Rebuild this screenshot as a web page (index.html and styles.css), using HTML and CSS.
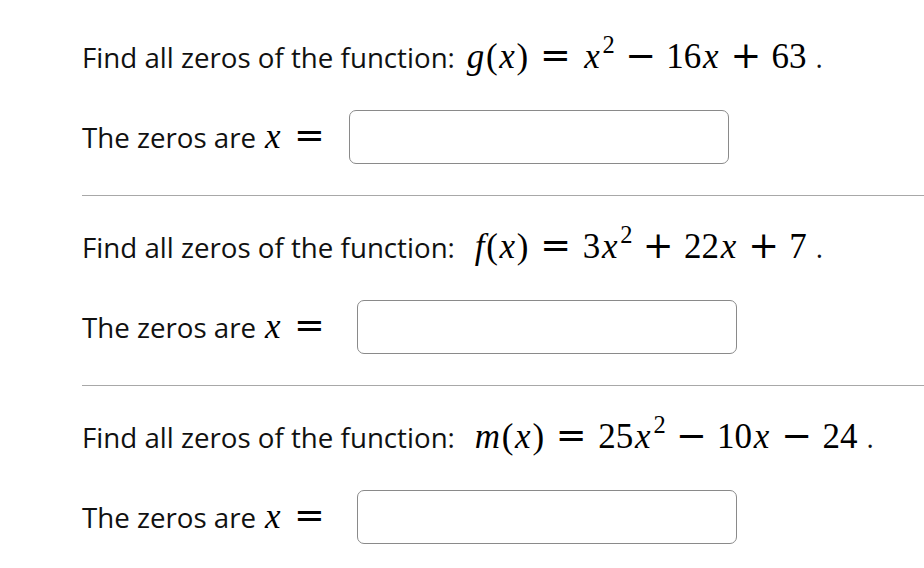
FILE: index.html
```html
<!DOCTYPE html>
<html>
<head>
<meta charset="utf-8">
<link rel="stylesheet" href="styles.css">
</head>
<body>
<main class="sheet">
  <section class="problem">
    <p class="question">Find all zeros of the function:<span class="math lead-tight"><i>g</i>(<i>x</i>)<span class="rel">=</span><i>x</i><sup>2</sup><span class="bin">−</span>16<i>x</i><span class="bin">+</span>63</span><span class="dot">.</span></p>
    <div class="answer">
      <span class="label">The zeros are <span class="math"><i>x</i><span class="rel">=</span></span></span>
      <span class="field field-near"></span>
    </div>
  </section>
  <div class="rule"></div>
  <section class="problem">
    <p class="question">Find all zeros of the function:<span class="math lead-wide"><i>f</i>(<i>x</i>)<span class="rel">=</span>3<i>x</i><sup>2</sup><span class="bin">+</span>22<i>x</i><span class="bin">+</span>7</span><span class="dot">.</span></p>
    <div class="answer">
      <span class="label">The zeros are <span class="math"><i>x</i><span class="rel">=</span></span></span>
      <span class="field"></span>
    </div>
  </section>
  <div class="rule"></div>
  <section class="problem">
    <p class="question">Find all zeros of the function:<span class="math lead-wide"><i>m</i>(<i>x</i>)<span class="rel">=</span>25<i>x</i><sup>2</sup><span class="bin">−</span>10<i>x</i><span class="bin">−</span>24</span><span class="dot">.</span></p>
    <div class="answer">
      <span class="label">The zeros are <span class="math"><i>x</i><span class="rel">=</span></span></span>
      <span class="field"></span>
    </div>
  </section>
</main>
</body>
</html>
```
FILE: styles.css
```css
html, body {
  margin: 0;
  padding: 0;
  background: #ffffff;
}
body {
  font-family: "Open Sans", "Noto Sans", sans-serif;
  color: #111111;
}
.sheet {
  padding: 36px 0 0 82px;
  display: flex;
  flex-direction: column;
}
.problem {
  display: flex;
  flex-direction: column;
  gap: 32px;
}
.question {
  margin: 0;
  height: 42px;
  line-height: 42px;
  font-size: 27.7px;
  white-space: nowrap;
}
.math {
  font-family: "Liberation Serif", "Times New Roman", serif;
  font-size: 35px;
  line-height: 1;
  color: #000;
}
.math i {
  font-family: "Liberation Serif", "Times New Roman", serif;
  font-style: italic;
  font-synthesis: style;
  padding: 0 0.05em;
}
.math sup {
  font-size: 0.7em;
  line-height: 0;
  position: relative;
  top: -0.1em;
  margin-left: 1px;
}
.lead-tight { margin-left: 10px; }
.lead-wide { margin-left: 18px; }
.rel, .bin {
  font-family: "DejaVu Serif", serif;
  font-size: 1.05em;
}
.rel { margin: 0 0.32em; }
.bin { margin: 0 0.28em; }
.dot {
  font-size: 27.7px;
  margin-left: 9px;
}
.answer {
  height: 54px;
  display: flex;
  align-items: center;
}
.label {
  font-size: 27.7px;
  white-space: nowrap;
}
.label .math .rel {
  margin-right: 0;
}
.field {
  box-sizing: border-box;
  width: 380px;
  height: 54px;
  border: 1px solid #8a8a8a;
  border-radius: 7px;
  margin-left: 32px;
}
.field-near {
  margin-left: 24px;
}
.rule {
  height: 1px;
  background: #a8a8a8;
  margin: 31px 0 30px;
}
```
